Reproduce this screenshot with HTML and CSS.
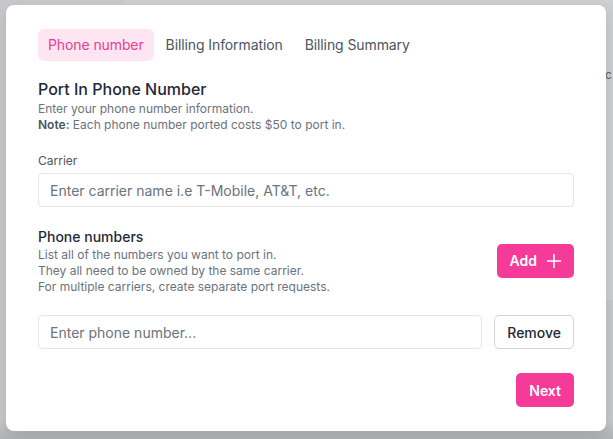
FILE: index.html
```html
<!DOCTYPE html>
<html lang="en">
<head>
<meta charset="utf-8">
<title>Port In Phone Number</title>
<link rel="stylesheet" href="styles.css">
</head>
<body>
<div class="backdrop">
  <div class="bg-card"></div>
  <span class="bg-text">ic</span>
  <div class="modal">
    <nav class="tabs">
      <span class="tab active">Phone number</span>
      <span class="tab">Billing Information</span>
      <span class="tab">Billing Summary</span>
    </nav>
    <h1 class="title">Port In Phone Number</h1>
    <p class="sub">Enter your phone number information.</p>
    <p class="sub"><strong>Note:</strong> Each phone number ported costs $50 to port in.</p>

    <label class="label">Carrier</label>
    <input class="input" type="text" placeholder="Enter carrier name i.e T-Mobile, AT&amp;T, etc.">

    <div class="numbers-head">
      <div class="numbers-text">
        <h2 class="subtitle">Phone numbers</h2>
        <p class="sub">List all of the numbers you want to port in.</p>
        <p class="sub">They all need to be owned by the same carrier.</p>
        <p class="sub">For multiple carriers, create separate port requests.</p>
      </div>
      <button class="btn primary add">Add
        <svg width="16" height="16" viewBox="0 0 16 16" fill="none" stroke="#fff" stroke-width="1.6" stroke-linecap="round"><path d="M8 1.5v13M1.5 8h13"/></svg>
      </button>
    </div>

    <div class="number-row">
      <input class="input grow" type="text" placeholder="Enter phone number...">
      <button class="btn outline">Remove</button>
    </div>

    <div class="footer">
      <button class="btn primary">Next</button>
    </div>
  </div>
</div>
</body>
</html>
```

FILE: styles.css
```css
* { box-sizing: border-box; }
html, body { margin: 0; padding: 0; }
body {
  font-family: Inter, "Noto Sans", "Liberation Sans", sans-serif;
  background: #c7c8cb;
  width: 613px;
  height: 439px;
  overflow: hidden;
}
.backdrop {
  position: relative;
  width: 613px;
  height: 439px;
  padding: 5px 0 0 6px;
  background: linear-gradient(#c7c8cb 0, #c7c8cb 420px, #b3b4b6 439px);
}
.bg-card {
  position: absolute;
  left: 121px;
  top: 0;
  right: 0;
  height: 300px;
  background: #cdced1;
  border-top-left-radius: 8px;
}
.bg-text {
  position: absolute;
  left: 602px;
  top: 67px;
  font-size: 12px;
  color: #5e6064;
}
.modal {
  position: relative;
  width: 600px;
  height: 426px;
  background: #fff;
  border-radius: 8px;
  padding: 24px 32px 24px 32px;
  box-shadow: 0 6px 14px rgba(0,0,0,0.12);
}
.tabs {
  display: flex;
  gap: 2px;
}
.tab {
  height: 32px;
  line-height: 32px;
  padding: 0 10px;
  font-size: 14px;
  letter-spacing: -0.1px;
  color: #4b5563;
  border-radius: 6px;
}
.tab.active {
  background: #fde6f2;
  color: #ec3c93;
}
.title {
  margin: 16px 0 0;
  font-size: 16px;
  line-height: 24px;
  font-weight: 500;
  color: #1f2937;
}
.sub {
  margin: 0;
  font-size: 12px;
  line-height: 16px;
  color: #6b7280;
}
.sub strong { font-weight: 600; color: #4b5563; }
.label {
  display: block;
  margin-top: 20px;
  font-size: 12px;
  line-height: 16px;
  color: #4b5563;
}
.input {
  display: block;
  width: 100%;
  height: 34px;
  margin-top: 4px;
  padding: 0 11px;
  border: 1px solid #e5e7eb;
  border-radius: 4px;
  font-family: inherit;
  font-size: 14px;
  color: #1f2937;
  background: #fff;
}
.input::placeholder { color: #6b7280; }
.numbers-head {
  display: flex;
  align-items: center;
  justify-content: space-between;
  margin-top: 20px;
}
.subtitle {
  margin: 0;
  font-size: 14px;
  line-height: 20px;
  font-weight: 500;
  color: #1f2937;
}
.btn {
  height: 34px;
  border-radius: 5px;
  font-family: inherit;
  font-size: 14px;
  font-weight: 600;
  padding: 0 13px;
  display: inline-flex;
  align-items: center;
  cursor: pointer;
}
.primary {
  background: #f53a97;
  color: #fff;
  border: none;
}
.add {
  gap: 9px;
  padding: 0 12px 0 13px;
  margin-top: -1px;
}
.outline {
  background: #fff;
  color: #1f2937;
  border: 1px solid #d1d5db;
  font-weight: 500;
  padding: 0 12px;
}
.number-row {
  display: flex;
  gap: 12px;
  margin-top: 20px;
}
.number-row .input { margin-top: 0; }
.grow { flex: 1; }
.footer {
  display: flex;
  justify-content: flex-end;
  margin-top: 24px;
}
```
